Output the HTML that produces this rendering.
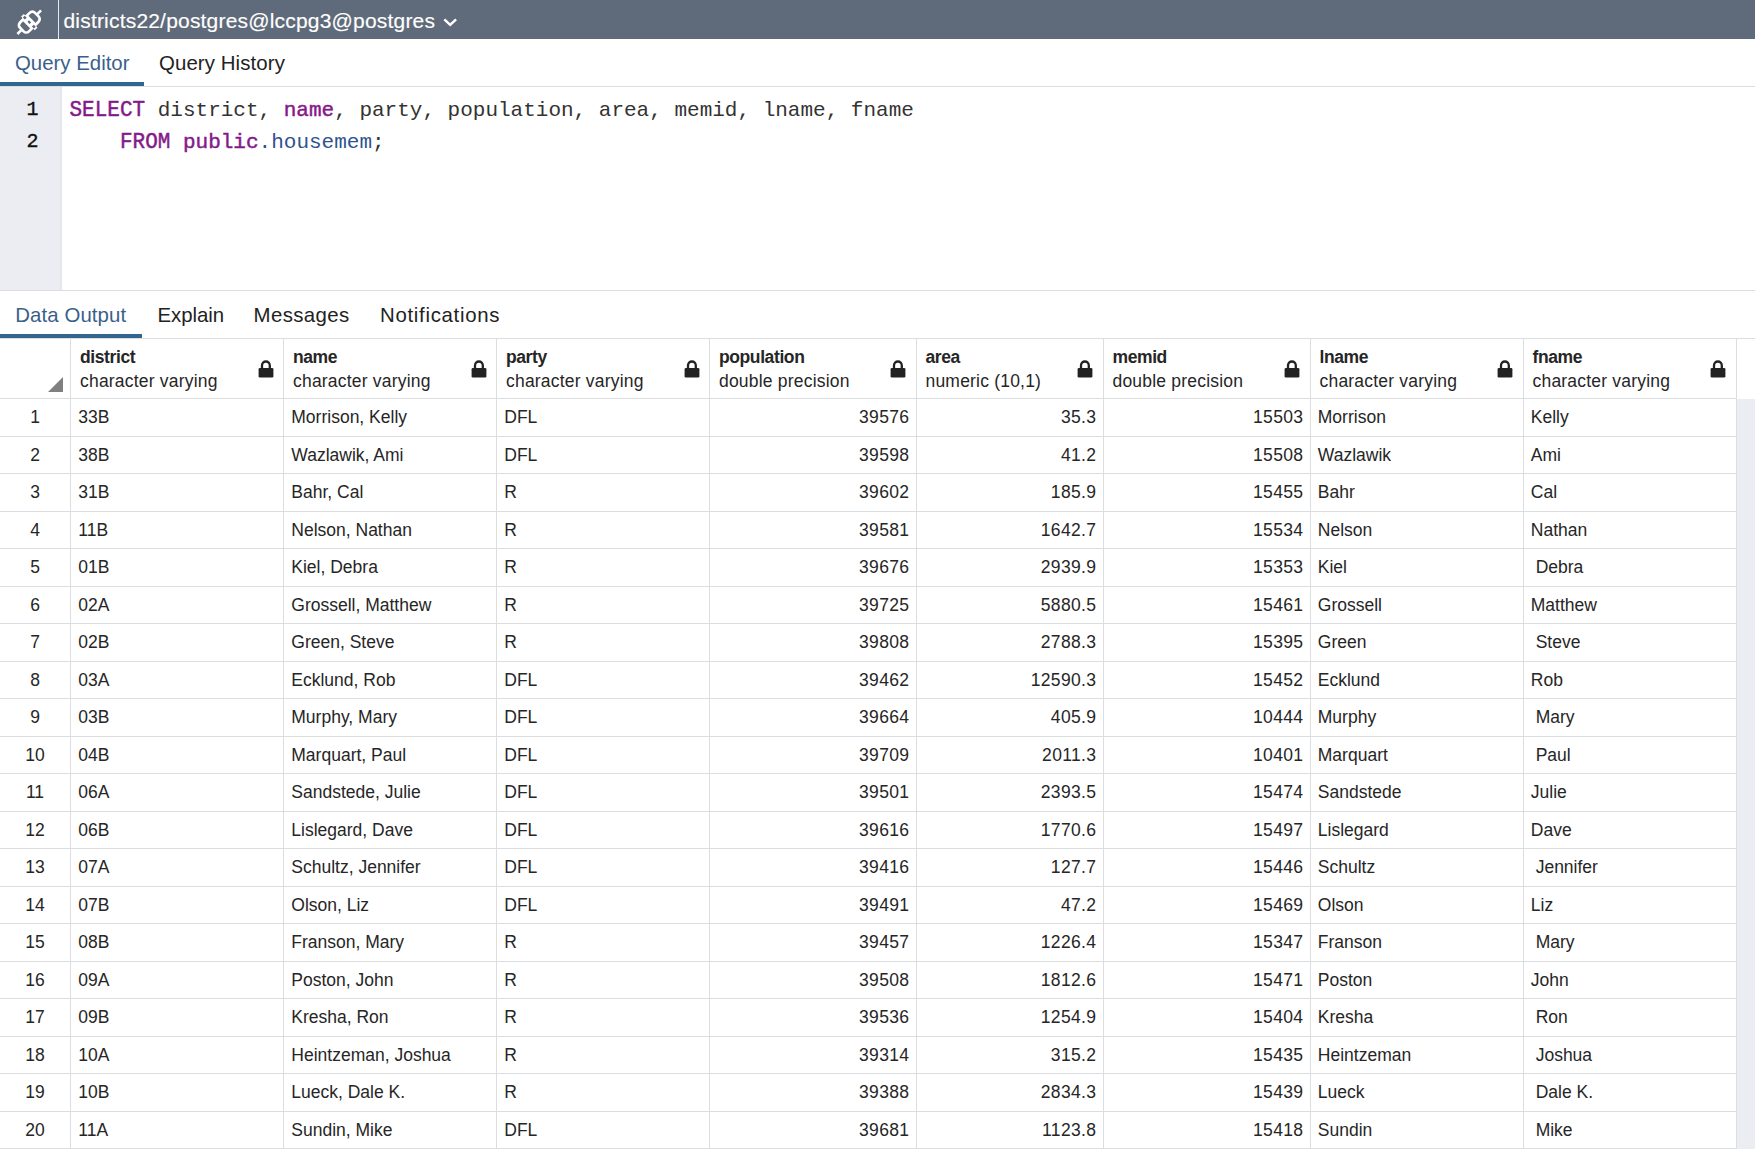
<!DOCTYPE html>
<html><head><meta charset="utf-8"><style>
html,body{margin:0;padding:0;}
body{width:1755px;height:1149px;overflow:hidden;position:relative;background:#fff;font-family:"Liberation Sans",sans-serif;color:#262626;}
.a{position:absolute;}
.t{position:absolute;line-height:0;white-space:pre;}
.hl{position:absolute;left:0;height:1px;background:#dcdddf;}
.vl{position:absolute;width:1px;background:#dcdddf;}
.lk{position:absolute;}
.code{position:absolute;line-height:0;white-space:pre;font-family:"Liberation Mono",monospace;font-size:21px;color:#222;transform-origin:0 0;}
.kw{color:#841a8a;-webkit-text-stroke:0.45px #86198c;}
.v2{color:#2f5290;}
.up{display:inline-block;transform:scaleY(1.03);transform-origin:0 5.6px;}
.code{color:#333;}
</style></head><body>

<div class="a" style="left:0;top:0;width:1755px;height:39px;background:#5f6b7a;"></div>
<div class="a" style="left:58px;top:0;width:1px;height:39px;background:#e8eaee;"></div>
<svg class="a" style="left:10px;top:4px" width="38" height="36" viewBox="0 0 38 36">
<g transform="translate(19.3 18.1) rotate(-45)">
<g fill="none" stroke="#fff">
<line x1="-16.8" y1="0" x2="-11" y2="0" stroke-width="2.6"/><line x1="11" y1="0" x2="16.6" y2="0" stroke-width="2.6"/>
<rect x="-10.6" y="-6.3" width="21.2" height="12.6" rx="3.8" stroke-width="2.7"/>
</g>
<rect x="-3.8" y="-5.5" width="7.6" height="11" fill="#fff"/>
<rect x="-1.9" y="-9.7" width="3.8" height="19.4" fill="#fff"/>
<rect x="-1.1" y="-1.5" width="2.2" height="3" fill="#5f6b7a"/>
<rect x="-1.3" y="-7.8" width="2.6" height="2.8" fill="#5f6b7a"/>
<rect x="-1.3" y="5" width="2.6" height="2.8" fill="#5f6b7a"/>
</g>
</svg>
<div class="t" style="left:63.5px;top:21.32px;font-size:21px;letter-spacing:0.19px;-webkit-text-stroke:0.15px #fff;color:#fff;">districts22/postgres@lccpg3@postgres</div>
<svg class="a" style="left:442px;top:15.6px" width="16" height="12" viewBox="0 0 16 12"><path d="M2.3 3.3 L8.2 8.8 L14.1 3.3" fill="none" stroke="#fff" stroke-width="2.5"/></svg>
<div class="t" style="left:15px;top:62.53px;font-size:20.4px;letter-spacing:0px;color:#3b5f8b;">Query Editor</div>
<div class="t" style="left:159px;top:62.53px;font-size:20.4px;letter-spacing:0.1px;color:#222;">Query History</div>
<div class="hl" style="top:86px;width:1755px;"></div>
<div class="a" style="left:0;top:82px;width:144px;height:4px;background:#326690;"></div>
<div class="a" style="left:0;top:87px;width:62px;height:203px;background:#ecedf2;"></div>
<div class="a" style="left:59.5px;top:87px;width:2px;height:203px;background:#e6e7ec;"></div>
<div class="code" style="left:0;width:38.6px;text-align:right;top:109.57px;font-size:20px;-webkit-text-stroke:0.35px #111;color:#111;">1</div>
<div class="code" style="left:0;width:38.6px;text-align:right;top:141.67px;font-size:20px;-webkit-text-stroke:0.35px #111;color:#111;">2</div>
<div class="code" style="left:69.5px;top:111.00px;"><span class="kw up">SELECT</span> district, <span class="kw">name</span>, party, population, area, memid, lname, fname</div>
<div class="code" style="left:69.5px;top:143.00px;">    <span class="kw up">FROM</span> <span class="kw">public</span><span class="v2">.housemem</span>;</div>
<div class="hl" style="top:290px;width:1755px;"></div>
<div class="t" style="left:15.2px;top:314.93px;font-size:20.4px;letter-spacing:0.1px;color:#3b5f8b;">Data Output</div>
<div class="t" style="left:157.5px;top:314.93px;font-size:20.4px;letter-spacing:-0.05px;color:#222;">Explain</div>
<div class="t" style="left:253.5px;top:314.93px;font-size:20.4px;letter-spacing:0.4px;color:#222;">Messages</div>
<div class="t" style="left:380px;top:314.93px;font-size:20.4px;letter-spacing:0.7px;color:#222;">Notifications</div>
<div class="hl" style="top:338px;width:1755px;"></div>
<div class="a" style="left:0;top:334px;width:142px;height:4px;background:#326690;"></div>
<div class="a" style="left:1736px;top:399.0px;width:19px;height:750.5px;background:#ecedf2;"></div>
<div class="hl" style="top:398px;width:1736px;"></div>
<div class="vl" style="left:70px;top:338px;height:811px;"></div>
<div class="vl" style="left:283px;top:338px;height:811px;"></div>
<div class="vl" style="left:496px;top:338px;height:811px;"></div>
<div class="vl" style="left:709px;top:338px;height:811px;"></div>
<div class="vl" style="left:916px;top:338px;height:811px;"></div>
<div class="vl" style="left:1103px;top:338px;height:811px;"></div>
<div class="vl" style="left:1310px;top:338px;height:811px;"></div>
<div class="vl" style="left:1523px;top:338px;height:811px;"></div>
<div class="vl" style="left:1736px;top:338px;height:811px;"></div>
<svg class="a" style="left:48px;top:377px" width="15" height="15" viewBox="0 0 15 15"><path d="M15 0 L15 15 L0 15 Z" fill="#808080"/></svg>
<div class="t" style="left:80.0px;top:356.94px;font-size:17.5px;font-weight:bold;letter-spacing:-0.4px;">district</div>
<div class="t" style="left:80.0px;top:380.94px;font-size:17.5px;letter-spacing:0.2px;">character varying</div>
<svg class="lk" style="left:257.6px;top:360px" width="16" height="18" viewBox="0 0 16 18"><path d="M4 8.6V5.4a3.9 3.9 0 0 1 7.8 0v3.2" fill="none" stroke="#222" stroke-width="2.3"/><rect x="0.6" y="8" width="14.8" height="9.6" rx="1.3" fill="#222"/></svg>
<div class="t" style="left:293.0px;top:356.94px;font-size:17.5px;font-weight:bold;letter-spacing:-0.4px;">name</div>
<div class="t" style="left:293.0px;top:380.94px;font-size:17.5px;letter-spacing:0.2px;">character varying</div>
<svg class="lk" style="left:470.6px;top:360px" width="16" height="18" viewBox="0 0 16 18"><path d="M4 8.6V5.4a3.9 3.9 0 0 1 7.8 0v3.2" fill="none" stroke="#222" stroke-width="2.3"/><rect x="0.6" y="8" width="14.8" height="9.6" rx="1.3" fill="#222"/></svg>
<div class="t" style="left:506.0px;top:356.94px;font-size:17.5px;font-weight:bold;letter-spacing:-0.4px;">party</div>
<div class="t" style="left:506.0px;top:380.94px;font-size:17.5px;letter-spacing:0.2px;">character varying</div>
<svg class="lk" style="left:683.6px;top:360px" width="16" height="18" viewBox="0 0 16 18"><path d="M4 8.6V5.4a3.9 3.9 0 0 1 7.8 0v3.2" fill="none" stroke="#222" stroke-width="2.3"/><rect x="0.6" y="8" width="14.8" height="9.6" rx="1.3" fill="#222"/></svg>
<div class="t" style="left:719.0px;top:356.94px;font-size:17.5px;font-weight:bold;letter-spacing:-0.4px;">population</div>
<div class="t" style="left:719.0px;top:380.94px;font-size:17.5px;letter-spacing:0.2px;">double precision</div>
<svg class="lk" style="left:890.1px;top:360px" width="16" height="18" viewBox="0 0 16 18"><path d="M4 8.6V5.4a3.9 3.9 0 0 1 7.8 0v3.2" fill="none" stroke="#222" stroke-width="2.3"/><rect x="0.6" y="8" width="14.8" height="9.6" rx="1.3" fill="#222"/></svg>
<div class="t" style="left:925.5px;top:356.94px;font-size:17.5px;font-weight:bold;letter-spacing:-0.4px;">area</div>
<div class="t" style="left:925.5px;top:380.94px;font-size:17.5px;letter-spacing:0.2px;">numeric (10,1)</div>
<svg class="lk" style="left:1077.1px;top:360px" width="16" height="18" viewBox="0 0 16 18"><path d="M4 8.6V5.4a3.9 3.9 0 0 1 7.8 0v3.2" fill="none" stroke="#222" stroke-width="2.3"/><rect x="0.6" y="8" width="14.8" height="9.6" rx="1.3" fill="#222"/></svg>
<div class="t" style="left:1112.5px;top:356.94px;font-size:17.5px;font-weight:bold;letter-spacing:-0.4px;">memid</div>
<div class="t" style="left:1112.5px;top:380.94px;font-size:17.5px;letter-spacing:0.2px;">double precision</div>
<svg class="lk" style="left:1284.1px;top:360px" width="16" height="18" viewBox="0 0 16 18"><path d="M4 8.6V5.4a3.9 3.9 0 0 1 7.8 0v3.2" fill="none" stroke="#222" stroke-width="2.3"/><rect x="0.6" y="8" width="14.8" height="9.6" rx="1.3" fill="#222"/></svg>
<div class="t" style="left:1319.5px;top:356.94px;font-size:17.5px;font-weight:bold;letter-spacing:-0.4px;">lname</div>
<div class="t" style="left:1319.5px;top:380.94px;font-size:17.5px;letter-spacing:0.2px;">character varying</div>
<svg class="lk" style="left:1497.1px;top:360px" width="16" height="18" viewBox="0 0 16 18"><path d="M4 8.6V5.4a3.9 3.9 0 0 1 7.8 0v3.2" fill="none" stroke="#222" stroke-width="2.3"/><rect x="0.6" y="8" width="14.8" height="9.6" rx="1.3" fill="#222"/></svg>
<div class="t" style="left:1532.5px;top:356.94px;font-size:17.5px;font-weight:bold;letter-spacing:-0.4px;">fname</div>
<div class="t" style="left:1532.5px;top:380.94px;font-size:17.5px;letter-spacing:0.2px;">character varying</div>
<svg class="lk" style="left:1710.1px;top:360px" width="16" height="18" viewBox="0 0 16 18"><path d="M4 8.6V5.4a3.9 3.9 0 0 1 7.8 0v3.2" fill="none" stroke="#222" stroke-width="2.3"/><rect x="0.6" y="8" width="14.8" height="9.6" rx="1.3" fill="#222"/></svg>
<div class="hl" style="top:436px;width:1736px;"></div>
<div class="t" style="left:0;width:70px;text-align:center;top:417.39px;font-size:17.5px;">1</div>
<div class="t" style="left:78.3px;top:417.39px;font-size:17.5px;">33B</div>
<div class="t" style="left:291.3px;top:417.39px;font-size:17.5px;">Morrison, Kelly</div>
<div class="t" style="left:504.3px;top:417.39px;font-size:17.5px;">DFL</div>
<div class="t" style="left:709.5px;width:199.9px;text-align:right;top:417.39px;font-size:17.5px;letter-spacing:0.35px;">39576</div>
<div class="t" style="left:916.0px;width:180.4px;text-align:right;top:417.39px;font-size:17.5px;letter-spacing:0.35px;">35.3</div>
<div class="t" style="left:1103.0px;width:200.4px;text-align:right;top:417.39px;font-size:17.5px;letter-spacing:0.35px;">15503</div>
<div class="t" style="left:1317.8px;top:417.39px;font-size:17.5px;">Morrison</div>
<div class="t" style="left:1530.8px;top:417.39px;font-size:17.5px;">Kelly</div>
<div class="hl" style="top:473px;width:1736px;"></div>
<div class="t" style="left:0;width:70px;text-align:center;top:454.89px;font-size:17.5px;">2</div>
<div class="t" style="left:78.3px;top:454.89px;font-size:17.5px;">38B</div>
<div class="t" style="left:291.3px;top:454.89px;font-size:17.5px;">Wazlawik, Ami</div>
<div class="t" style="left:504.3px;top:454.89px;font-size:17.5px;">DFL</div>
<div class="t" style="left:709.5px;width:199.9px;text-align:right;top:454.89px;font-size:17.5px;letter-spacing:0.35px;">39598</div>
<div class="t" style="left:916.0px;width:180.4px;text-align:right;top:454.89px;font-size:17.5px;letter-spacing:0.35px;">41.2</div>
<div class="t" style="left:1103.0px;width:200.4px;text-align:right;top:454.89px;font-size:17.5px;letter-spacing:0.35px;">15508</div>
<div class="t" style="left:1317.8px;top:454.89px;font-size:17.5px;">Wazlawik</div>
<div class="t" style="left:1530.8px;top:454.89px;font-size:17.5px;">Ami</div>
<div class="hl" style="top:511px;width:1736px;"></div>
<div class="t" style="left:0;width:70px;text-align:center;top:492.39px;font-size:17.5px;">3</div>
<div class="t" style="left:78.3px;top:492.39px;font-size:17.5px;">31B</div>
<div class="t" style="left:291.3px;top:492.39px;font-size:17.5px;">Bahr, Cal</div>
<div class="t" style="left:504.3px;top:492.39px;font-size:17.5px;">R</div>
<div class="t" style="left:709.5px;width:199.9px;text-align:right;top:492.39px;font-size:17.5px;letter-spacing:0.35px;">39602</div>
<div class="t" style="left:916.0px;width:180.4px;text-align:right;top:492.39px;font-size:17.5px;letter-spacing:0.35px;">185.9</div>
<div class="t" style="left:1103.0px;width:200.4px;text-align:right;top:492.39px;font-size:17.5px;letter-spacing:0.35px;">15455</div>
<div class="t" style="left:1317.8px;top:492.39px;font-size:17.5px;">Bahr</div>
<div class="t" style="left:1530.8px;top:492.39px;font-size:17.5px;">Cal</div>
<div class="hl" style="top:548px;width:1736px;"></div>
<div class="t" style="left:0;width:70px;text-align:center;top:529.89px;font-size:17.5px;">4</div>
<div class="t" style="left:78.3px;top:529.89px;font-size:17.5px;">11B</div>
<div class="t" style="left:291.3px;top:529.89px;font-size:17.5px;">Nelson, Nathan</div>
<div class="t" style="left:504.3px;top:529.89px;font-size:17.5px;">R</div>
<div class="t" style="left:709.5px;width:199.9px;text-align:right;top:529.89px;font-size:17.5px;letter-spacing:0.35px;">39581</div>
<div class="t" style="left:916.0px;width:180.4px;text-align:right;top:529.89px;font-size:17.5px;letter-spacing:0.35px;">1642.7</div>
<div class="t" style="left:1103.0px;width:200.4px;text-align:right;top:529.89px;font-size:17.5px;letter-spacing:0.35px;">15534</div>
<div class="t" style="left:1317.8px;top:529.89px;font-size:17.5px;">Nelson</div>
<div class="t" style="left:1530.8px;top:529.89px;font-size:17.5px;">Nathan</div>
<div class="hl" style="top:586px;width:1736px;"></div>
<div class="t" style="left:0;width:70px;text-align:center;top:567.39px;font-size:17.5px;">5</div>
<div class="t" style="left:78.3px;top:567.39px;font-size:17.5px;">01B</div>
<div class="t" style="left:291.3px;top:567.39px;font-size:17.5px;">Kiel, Debra</div>
<div class="t" style="left:504.3px;top:567.39px;font-size:17.5px;">R</div>
<div class="t" style="left:709.5px;width:199.9px;text-align:right;top:567.39px;font-size:17.5px;letter-spacing:0.35px;">39676</div>
<div class="t" style="left:916.0px;width:180.4px;text-align:right;top:567.39px;font-size:17.5px;letter-spacing:0.35px;">2939.9</div>
<div class="t" style="left:1103.0px;width:200.4px;text-align:right;top:567.39px;font-size:17.5px;letter-spacing:0.35px;">15353</div>
<div class="t" style="left:1317.8px;top:567.39px;font-size:17.5px;">Kiel</div>
<div class="t" style="left:1530.8px;top:567.39px;font-size:17.5px;"> Debra</div>
<div class="hl" style="top:623px;width:1736px;"></div>
<div class="t" style="left:0;width:70px;text-align:center;top:604.89px;font-size:17.5px;">6</div>
<div class="t" style="left:78.3px;top:604.89px;font-size:17.5px;">02A</div>
<div class="t" style="left:291.3px;top:604.89px;font-size:17.5px;">Grossell, Matthew</div>
<div class="t" style="left:504.3px;top:604.89px;font-size:17.5px;">R</div>
<div class="t" style="left:709.5px;width:199.9px;text-align:right;top:604.89px;font-size:17.5px;letter-spacing:0.35px;">39725</div>
<div class="t" style="left:916.0px;width:180.4px;text-align:right;top:604.89px;font-size:17.5px;letter-spacing:0.35px;">5880.5</div>
<div class="t" style="left:1103.0px;width:200.4px;text-align:right;top:604.89px;font-size:17.5px;letter-spacing:0.35px;">15461</div>
<div class="t" style="left:1317.8px;top:604.89px;font-size:17.5px;">Grossell</div>
<div class="t" style="left:1530.8px;top:604.89px;font-size:17.5px;">Matthew</div>
<div class="hl" style="top:661px;width:1736px;"></div>
<div class="t" style="left:0;width:70px;text-align:center;top:642.39px;font-size:17.5px;">7</div>
<div class="t" style="left:78.3px;top:642.39px;font-size:17.5px;">02B</div>
<div class="t" style="left:291.3px;top:642.39px;font-size:17.5px;">Green, Steve</div>
<div class="t" style="left:504.3px;top:642.39px;font-size:17.5px;">R</div>
<div class="t" style="left:709.5px;width:199.9px;text-align:right;top:642.39px;font-size:17.5px;letter-spacing:0.35px;">39808</div>
<div class="t" style="left:916.0px;width:180.4px;text-align:right;top:642.39px;font-size:17.5px;letter-spacing:0.35px;">2788.3</div>
<div class="t" style="left:1103.0px;width:200.4px;text-align:right;top:642.39px;font-size:17.5px;letter-spacing:0.35px;">15395</div>
<div class="t" style="left:1317.8px;top:642.39px;font-size:17.5px;">Green</div>
<div class="t" style="left:1530.8px;top:642.39px;font-size:17.5px;"> Steve</div>
<div class="hl" style="top:698px;width:1736px;"></div>
<div class="t" style="left:0;width:70px;text-align:center;top:679.89px;font-size:17.5px;">8</div>
<div class="t" style="left:78.3px;top:679.89px;font-size:17.5px;">03A</div>
<div class="t" style="left:291.3px;top:679.89px;font-size:17.5px;">Ecklund, Rob</div>
<div class="t" style="left:504.3px;top:679.89px;font-size:17.5px;">DFL</div>
<div class="t" style="left:709.5px;width:199.9px;text-align:right;top:679.89px;font-size:17.5px;letter-spacing:0.35px;">39462</div>
<div class="t" style="left:916.0px;width:180.4px;text-align:right;top:679.89px;font-size:17.5px;letter-spacing:0.35px;">12590.3</div>
<div class="t" style="left:1103.0px;width:200.4px;text-align:right;top:679.89px;font-size:17.5px;letter-spacing:0.35px;">15452</div>
<div class="t" style="left:1317.8px;top:679.89px;font-size:17.5px;">Ecklund</div>
<div class="t" style="left:1530.8px;top:679.89px;font-size:17.5px;">Rob</div>
<div class="hl" style="top:736px;width:1736px;"></div>
<div class="t" style="left:0;width:70px;text-align:center;top:717.39px;font-size:17.5px;">9</div>
<div class="t" style="left:78.3px;top:717.39px;font-size:17.5px;">03B</div>
<div class="t" style="left:291.3px;top:717.39px;font-size:17.5px;">Murphy, Mary</div>
<div class="t" style="left:504.3px;top:717.39px;font-size:17.5px;">DFL</div>
<div class="t" style="left:709.5px;width:199.9px;text-align:right;top:717.39px;font-size:17.5px;letter-spacing:0.35px;">39664</div>
<div class="t" style="left:916.0px;width:180.4px;text-align:right;top:717.39px;font-size:17.5px;letter-spacing:0.35px;">405.9</div>
<div class="t" style="left:1103.0px;width:200.4px;text-align:right;top:717.39px;font-size:17.5px;letter-spacing:0.35px;">10444</div>
<div class="t" style="left:1317.8px;top:717.39px;font-size:17.5px;">Murphy</div>
<div class="t" style="left:1530.8px;top:717.39px;font-size:17.5px;"> Mary</div>
<div class="hl" style="top:773px;width:1736px;"></div>
<div class="t" style="left:0;width:70px;text-align:center;top:754.89px;font-size:17.5px;">10</div>
<div class="t" style="left:78.3px;top:754.89px;font-size:17.5px;">04B</div>
<div class="t" style="left:291.3px;top:754.89px;font-size:17.5px;">Marquart, Paul</div>
<div class="t" style="left:504.3px;top:754.89px;font-size:17.5px;">DFL</div>
<div class="t" style="left:709.5px;width:199.9px;text-align:right;top:754.89px;font-size:17.5px;letter-spacing:0.35px;">39709</div>
<div class="t" style="left:916.0px;width:180.4px;text-align:right;top:754.89px;font-size:17.5px;letter-spacing:0.35px;">2011.3</div>
<div class="t" style="left:1103.0px;width:200.4px;text-align:right;top:754.89px;font-size:17.5px;letter-spacing:0.35px;">10401</div>
<div class="t" style="left:1317.8px;top:754.89px;font-size:17.5px;">Marquart</div>
<div class="t" style="left:1530.8px;top:754.89px;font-size:17.5px;"> Paul</div>
<div class="hl" style="top:811px;width:1736px;"></div>
<div class="t" style="left:0;width:70px;text-align:center;top:792.39px;font-size:17.5px;">11</div>
<div class="t" style="left:78.3px;top:792.39px;font-size:17.5px;">06A</div>
<div class="t" style="left:291.3px;top:792.39px;font-size:17.5px;">Sandstede, Julie</div>
<div class="t" style="left:504.3px;top:792.39px;font-size:17.5px;">DFL</div>
<div class="t" style="left:709.5px;width:199.9px;text-align:right;top:792.39px;font-size:17.5px;letter-spacing:0.35px;">39501</div>
<div class="t" style="left:916.0px;width:180.4px;text-align:right;top:792.39px;font-size:17.5px;letter-spacing:0.35px;">2393.5</div>
<div class="t" style="left:1103.0px;width:200.4px;text-align:right;top:792.39px;font-size:17.5px;letter-spacing:0.35px;">15474</div>
<div class="t" style="left:1317.8px;top:792.39px;font-size:17.5px;">Sandstede</div>
<div class="t" style="left:1530.8px;top:792.39px;font-size:17.5px;">Julie</div>
<div class="hl" style="top:848px;width:1736px;"></div>
<div class="t" style="left:0;width:70px;text-align:center;top:829.89px;font-size:17.5px;">12</div>
<div class="t" style="left:78.3px;top:829.89px;font-size:17.5px;">06B</div>
<div class="t" style="left:291.3px;top:829.89px;font-size:17.5px;">Lislegard, Dave</div>
<div class="t" style="left:504.3px;top:829.89px;font-size:17.5px;">DFL</div>
<div class="t" style="left:709.5px;width:199.9px;text-align:right;top:829.89px;font-size:17.5px;letter-spacing:0.35px;">39616</div>
<div class="t" style="left:916.0px;width:180.4px;text-align:right;top:829.89px;font-size:17.5px;letter-spacing:0.35px;">1770.6</div>
<div class="t" style="left:1103.0px;width:200.4px;text-align:right;top:829.89px;font-size:17.5px;letter-spacing:0.35px;">15497</div>
<div class="t" style="left:1317.8px;top:829.89px;font-size:17.5px;">Lislegard</div>
<div class="t" style="left:1530.8px;top:829.89px;font-size:17.5px;">Dave</div>
<div class="hl" style="top:886px;width:1736px;"></div>
<div class="t" style="left:0;width:70px;text-align:center;top:867.39px;font-size:17.5px;">13</div>
<div class="t" style="left:78.3px;top:867.39px;font-size:17.5px;">07A</div>
<div class="t" style="left:291.3px;top:867.39px;font-size:17.5px;">Schultz, Jennifer</div>
<div class="t" style="left:504.3px;top:867.39px;font-size:17.5px;">DFL</div>
<div class="t" style="left:709.5px;width:199.9px;text-align:right;top:867.39px;font-size:17.5px;letter-spacing:0.35px;">39416</div>
<div class="t" style="left:916.0px;width:180.4px;text-align:right;top:867.39px;font-size:17.5px;letter-spacing:0.35px;">127.7</div>
<div class="t" style="left:1103.0px;width:200.4px;text-align:right;top:867.39px;font-size:17.5px;letter-spacing:0.35px;">15446</div>
<div class="t" style="left:1317.8px;top:867.39px;font-size:17.5px;">Schultz</div>
<div class="t" style="left:1530.8px;top:867.39px;font-size:17.5px;"> Jennifer</div>
<div class="hl" style="top:923px;width:1736px;"></div>
<div class="t" style="left:0;width:70px;text-align:center;top:904.89px;font-size:17.5px;">14</div>
<div class="t" style="left:78.3px;top:904.89px;font-size:17.5px;">07B</div>
<div class="t" style="left:291.3px;top:904.89px;font-size:17.5px;">Olson, Liz</div>
<div class="t" style="left:504.3px;top:904.89px;font-size:17.5px;">DFL</div>
<div class="t" style="left:709.5px;width:199.9px;text-align:right;top:904.89px;font-size:17.5px;letter-spacing:0.35px;">39491</div>
<div class="t" style="left:916.0px;width:180.4px;text-align:right;top:904.89px;font-size:17.5px;letter-spacing:0.35px;">47.2</div>
<div class="t" style="left:1103.0px;width:200.4px;text-align:right;top:904.89px;font-size:17.5px;letter-spacing:0.35px;">15469</div>
<div class="t" style="left:1317.8px;top:904.89px;font-size:17.5px;">Olson</div>
<div class="t" style="left:1530.8px;top:904.89px;font-size:17.5px;">Liz</div>
<div class="hl" style="top:961px;width:1736px;"></div>
<div class="t" style="left:0;width:70px;text-align:center;top:942.39px;font-size:17.5px;">15</div>
<div class="t" style="left:78.3px;top:942.39px;font-size:17.5px;">08B</div>
<div class="t" style="left:291.3px;top:942.39px;font-size:17.5px;">Franson, Mary</div>
<div class="t" style="left:504.3px;top:942.39px;font-size:17.5px;">R</div>
<div class="t" style="left:709.5px;width:199.9px;text-align:right;top:942.39px;font-size:17.5px;letter-spacing:0.35px;">39457</div>
<div class="t" style="left:916.0px;width:180.4px;text-align:right;top:942.39px;font-size:17.5px;letter-spacing:0.35px;">1226.4</div>
<div class="t" style="left:1103.0px;width:200.4px;text-align:right;top:942.39px;font-size:17.5px;letter-spacing:0.35px;">15347</div>
<div class="t" style="left:1317.8px;top:942.39px;font-size:17.5px;">Franson</div>
<div class="t" style="left:1530.8px;top:942.39px;font-size:17.5px;"> Mary</div>
<div class="hl" style="top:998px;width:1736px;"></div>
<div class="t" style="left:0;width:70px;text-align:center;top:979.89px;font-size:17.5px;">16</div>
<div class="t" style="left:78.3px;top:979.89px;font-size:17.5px;">09A</div>
<div class="t" style="left:291.3px;top:979.89px;font-size:17.5px;">Poston, John</div>
<div class="t" style="left:504.3px;top:979.89px;font-size:17.5px;">R</div>
<div class="t" style="left:709.5px;width:199.9px;text-align:right;top:979.89px;font-size:17.5px;letter-spacing:0.35px;">39508</div>
<div class="t" style="left:916.0px;width:180.4px;text-align:right;top:979.89px;font-size:17.5px;letter-spacing:0.35px;">1812.6</div>
<div class="t" style="left:1103.0px;width:200.4px;text-align:right;top:979.89px;font-size:17.5px;letter-spacing:0.35px;">15471</div>
<div class="t" style="left:1317.8px;top:979.89px;font-size:17.5px;">Poston</div>
<div class="t" style="left:1530.8px;top:979.89px;font-size:17.5px;">John</div>
<div class="hl" style="top:1036px;width:1736px;"></div>
<div class="t" style="left:0;width:70px;text-align:center;top:1017.39px;font-size:17.5px;">17</div>
<div class="t" style="left:78.3px;top:1017.39px;font-size:17.5px;">09B</div>
<div class="t" style="left:291.3px;top:1017.39px;font-size:17.5px;">Kresha, Ron</div>
<div class="t" style="left:504.3px;top:1017.39px;font-size:17.5px;">R</div>
<div class="t" style="left:709.5px;width:199.9px;text-align:right;top:1017.39px;font-size:17.5px;letter-spacing:0.35px;">39536</div>
<div class="t" style="left:916.0px;width:180.4px;text-align:right;top:1017.39px;font-size:17.5px;letter-spacing:0.35px;">1254.9</div>
<div class="t" style="left:1103.0px;width:200.4px;text-align:right;top:1017.39px;font-size:17.5px;letter-spacing:0.35px;">15404</div>
<div class="t" style="left:1317.8px;top:1017.39px;font-size:17.5px;">Kresha</div>
<div class="t" style="left:1530.8px;top:1017.39px;font-size:17.5px;"> Ron</div>
<div class="hl" style="top:1073px;width:1736px;"></div>
<div class="t" style="left:0;width:70px;text-align:center;top:1054.89px;font-size:17.5px;">18</div>
<div class="t" style="left:78.3px;top:1054.89px;font-size:17.5px;">10A</div>
<div class="t" style="left:291.3px;top:1054.89px;font-size:17.5px;">Heintzeman, Joshua</div>
<div class="t" style="left:504.3px;top:1054.89px;font-size:17.5px;">R</div>
<div class="t" style="left:709.5px;width:199.9px;text-align:right;top:1054.89px;font-size:17.5px;letter-spacing:0.35px;">39314</div>
<div class="t" style="left:916.0px;width:180.4px;text-align:right;top:1054.89px;font-size:17.5px;letter-spacing:0.35px;">315.2</div>
<div class="t" style="left:1103.0px;width:200.4px;text-align:right;top:1054.89px;font-size:17.5px;letter-spacing:0.35px;">15435</div>
<div class="t" style="left:1317.8px;top:1054.89px;font-size:17.5px;">Heintzeman</div>
<div class="t" style="left:1530.8px;top:1054.89px;font-size:17.5px;"> Joshua</div>
<div class="hl" style="top:1111px;width:1736px;"></div>
<div class="t" style="left:0;width:70px;text-align:center;top:1092.39px;font-size:17.5px;">19</div>
<div class="t" style="left:78.3px;top:1092.39px;font-size:17.5px;">10B</div>
<div class="t" style="left:291.3px;top:1092.39px;font-size:17.5px;">Lueck, Dale K.</div>
<div class="t" style="left:504.3px;top:1092.39px;font-size:17.5px;">R</div>
<div class="t" style="left:709.5px;width:199.9px;text-align:right;top:1092.39px;font-size:17.5px;letter-spacing:0.35px;">39388</div>
<div class="t" style="left:916.0px;width:180.4px;text-align:right;top:1092.39px;font-size:17.5px;letter-spacing:0.35px;">2834.3</div>
<div class="t" style="left:1103.0px;width:200.4px;text-align:right;top:1092.39px;font-size:17.5px;letter-spacing:0.35px;">15439</div>
<div class="t" style="left:1317.8px;top:1092.39px;font-size:17.5px;">Lueck</div>
<div class="t" style="left:1530.8px;top:1092.39px;font-size:17.5px;"> Dale K.</div>
<div class="hl" style="top:1148px;width:1736px;"></div>
<div class="t" style="left:0;width:70px;text-align:center;top:1129.89px;font-size:17.5px;">20</div>
<div class="t" style="left:78.3px;top:1129.89px;font-size:17.5px;">11A</div>
<div class="t" style="left:291.3px;top:1129.89px;font-size:17.5px;">Sundin, Mike</div>
<div class="t" style="left:504.3px;top:1129.89px;font-size:17.5px;">DFL</div>
<div class="t" style="left:709.5px;width:199.9px;text-align:right;top:1129.89px;font-size:17.5px;letter-spacing:0.35px;">39681</div>
<div class="t" style="left:916.0px;width:180.4px;text-align:right;top:1129.89px;font-size:17.5px;letter-spacing:0.35px;">1123.8</div>
<div class="t" style="left:1103.0px;width:200.4px;text-align:right;top:1129.89px;font-size:17.5px;letter-spacing:0.35px;">15418</div>
<div class="t" style="left:1317.8px;top:1129.89px;font-size:17.5px;">Sundin</div>
<div class="t" style="left:1530.8px;top:1129.89px;font-size:17.5px;"> Mike</div>
</body></html>
